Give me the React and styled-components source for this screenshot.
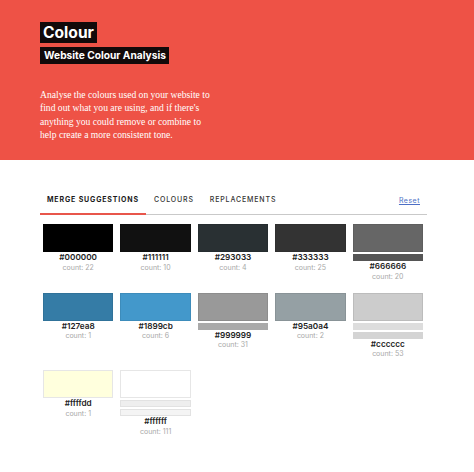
import React from 'react'
import styled, { createGlobalStyle } from 'styled-components'

const Global = createGlobalStyle`
  body {
    margin: 0;
    background: #fff;
    font-family: Inter, "Liberation Sans", Arial, sans-serif;
  }
`

const Header = styled.header`
  background: #ee5246;
  height: 160px;
  box-sizing: border-box;
  padding: 22px 40px 0;
`

const Title = styled.h1`
  display: inline-block;
  margin: 0;
  background: #120a0a;
  color: #fff;
  font-size: 15.6px;
  line-height: 21px;
  font-weight: 700;
  padding: 0 3px 0 3px;
`

const Subtitle = styled.h2`
  display: inline-block;
  margin: 0;
  background: #120a0a;
  color: #fff;
  font-size: 10.2px;
  line-height: 17px;
  font-weight: 700;
  padding: 0 3px 0 4px;
`

const Intro = styled.p`
  margin: 24px 0 0;
  width: 220px;
  color: #fff;
  font-family: "Liberation Serif", "Times New Roman", serif;
  font-size: 9.6px;
  line-height: 13.3px;
  white-space: nowrap;
`

const Main = styled.main`
  padding: 0 40px;
  width: 387px;
`

const Tabs = styled.nav`
  display: flex;
  align-items: flex-end;
  margin-top: 35px;
  border-bottom: 1px solid #c9c9c9;
`

const Tab = styled.div`
  font-size: 7px;
  font-weight: ${p => (p.$active ? 700 : 500)};
  letter-spacing: 0.85px;
  color: ${p => (p.$active ? '#1a1a1a' : '#333')};
  padding: 0 ${p => (p.$active ? '7px' : '8px')} 9px;
  margin-bottom: -1px;
  border-bottom: 2px solid ${p => (p.$active ? '#e8564b' : 'transparent')};
`

const Reset = styled.a`
  margin-left: auto;
  margin-right: 7px;
  padding-bottom: 9px;
  font-size: 7px;
  letter-spacing: 0.5px;
  color: #4d6fc5;
  text-decoration: underline;
`

const Grid = styled.div`
  display: grid;
  grid-template-columns: repeat(5, 1fr);
  row-gap: 12px;
  margin-top: 9px;
`

const Item = styled.div`
  padding: 0 4px 0 3px;
  text-align: center;
`

const Swatch = styled.div`
  height: 28px;
  background: ${p => p.$c};
  box-sizing: border-box;
  border: 1px solid ${p => (p.$light ? '#e6e6e6' : 'rgba(0,0,0,0.08)')};
`

const Bar = styled.div`
  height: 7px;
  margin-top: 2px;
  background: ${p => p.$c};
  box-sizing: border-box;
  border: 1px solid ${p => (p.$light ? '#e2e2e2' : 'transparent')};
`

const Hex = styled.div`
  margin-top: 1px;
  font-size: 8.2px;
  line-height: 9.5px;
  font-weight: 600;
  color: #222;
`

const Count = styled.div`
  font-size: 7px;
  line-height: 9px;
  color: #a8a8a8;
`

const colours = [
  { hex: '#000000', count: 22 },
  { hex: '#111111', count: 10 },
  { hex: '#293033', count: 4 },
  { hex: '#333333', count: 25 },
  { hex: '#666666', count: 20, bars: ['#555555'] },
  { hex: '#127ea8', swatch: '#357ca6', count: 1 },
  { hex: '#1899cb', swatch: '#4398cb', count: 6 },
  { hex: '#999999', count: 31, bars: ['#aaaaaa'] },
  { hex: '#95a0a4', count: 2 },
  { hex: '#cccccc', count: 53, bars: ['#dddddd', '#d4d4d4'] },
  { hex: '#ffffdd', count: 1, light: true },
  { hex: '#ffffff', count: 111, light: true, bars: ['#eeeeee', '#f4f4f4'] },
]

export default function App() {
  return (
    <>
      <Global />
      <Header>
        <Title>Colour</Title>
        <br />
        <Subtitle>Website Colour Analysis</Subtitle>
        <Intro>
          Analyse the colours used on your website to
          <br />
          find out what you are using, and if there's
          <br />
          anything you could remove or combine to
          <br />
          help create a more consistent tone.
        </Intro>
      </Header>
      <Main>
        <Tabs>
          <Tab $active>MERGE SUGGESTIONS</Tab>
          <Tab>COLOURS</Tab>
          <Tab>REPLACEMENTS</Tab>
          <Reset href="#">Reset</Reset>
        </Tabs>
        <Grid>
          {colours.map(c => (
            <Item key={c.hex}>
              <Swatch $c={c.swatch || c.hex} $light={c.light} />
              {(c.bars || []).map(b => (
                <Bar key={b} $c={b} $light={c.light} />
              ))}
              <Hex>{c.hex}</Hex>
              <Count>count: {c.count}</Count>
            </Item>
          ))}
        </Grid>
      </Main>
    </>
  )
}
